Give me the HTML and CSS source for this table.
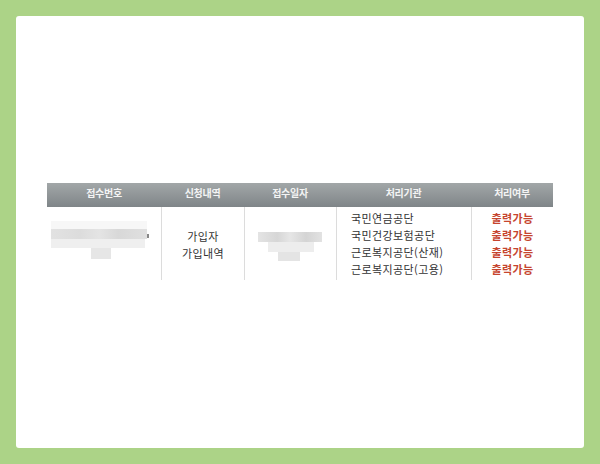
FILE: index.html
```html
<!DOCTYPE html>
<html lang="ko">
<head>
<meta charset="utf-8">
<link rel="stylesheet" href="styles.css">
</head>
<body>
<div class="card">
  <div class="table">
    <div class="head">
      <div class="th">접수번호</div>
      <div class="th">신청내역</div>
      <div class="th">접수일자</div>
      <div class="th">처리기관</div>
      <div class="th">처리여부</div>
    </div>
    <div class="body">
      <div class="td c1">
        <div class="blur b1">
          <span class="px r0"></span>
          <span class="px r1"></span>
          <span class="px r2"></span>
          <span class="px r3"></span>
          <span class="mark"></span>
        </div>
      </div>
      <div class="td c2">
        <div>가입자</div>
        <div>가입내역</div>
      </div>
      <div class="td c3">
        <div class="blur b3">
          <span class="px s1"></span>
          <span class="px s2"></span>
          <span class="px s3"></span>
        </div>
      </div>
      <div class="td c4">
        <div>국민연금공단</div>
        <div>국민건강보험공단</div>
        <div>근로복지공단(산재)</div>
        <div>근로복지공단(고용)</div>
      </div>
      <div class="td c5">
        <div>출력가능</div>
        <div>출력가능</div>
        <div>출력가능</div>
        <div>출력가능</div>
      </div>
    </div>
  </div>
</div>
</body>
</html>
```
FILE: styles.css
```css
html, body {
  margin: 0;
  padding: 0;
}
body {
  width: 600px;
  height: 464px;
  background: #acd387;
  padding: 16px;
  box-sizing: border-box;
  font-family: "Noto Sans CJK KR", "Noto Sans", sans-serif;
}
.card {
  background: #fff;
  width: 568px;
  height: 432px;
  border-radius: 3px;
  padding: 167px 31px 0 31px;
  box-sizing: border-box;
}
.table {
  width: 506px;
}
.head, .body {
  display: grid;
  grid-template-columns: 114px 83px 92px 135px 82px;
}
.head {
  height: 24px;
  background: linear-gradient(#a2a7a8, #7f8588);
}
.th {
  color: #f4f4f4;
  font-size: 10px;
  font-weight: bold;
  line-height: 20px;
  text-align: center;
  letter-spacing: -0.3px;
}
.body {
  height: 73px;
}
.td {
  border-left: 1px solid #dcdcdc;
  font-size: 11px;
  color: #333;
  line-height: 17px;
  letter-spacing: 0.4px;
  display: flex;
  flex-direction: column;
  justify-content: center;
}
.td.c1 {
  border-left: none;
}
.c2 {
  text-align: center;
  padding-top: 2px;
}
.c4 {
  padding-left: 14px;
  padding-top: 1px;
}
.c5 {
  text-align: center;
  color: #c6452f;
  font-weight: bold;
  padding-top: 1px;
}
.blur {
  position: relative;
  height: 48px;
}
.px {
  position: absolute;
  display: block;
}
.b1 .r0 { left: 4px; top: 0; width: 96px; height: 8px; background: #f7f7f7; }
.b1 .r1 { left: 4px; top: 8px; width: 96px; height: 10px; background: linear-gradient(90deg, #e2e2e2, #dcdcdc 30%, #e4e4e4 50%, #d8d8d8 70%, #e0e0e0); }
.b1 .r2 { left: 4px; top: 18px; width: 94px; height: 9px; background: #efefef; }
.b1 .r3 { left: 44px; top: 27px; width: 20px; height: 11px; background: #e6e6e6; }
.b1 .mark { position: absolute; left: 100px; top: 13px; width: 2px; height: 4px; background: #888; }
.b3 .s1 { left: 13px; top: 1px; width: 64px; height: 10px; background: linear-gradient(90deg, #e4e4e4, #d6d6d6 30%, #e6e6e6 50%, #d4d4d4 75%, #e2e2e2); }
.b3 .s2 { left: 23px; top: 11px; width: 46px; height: 10px; background: #ededed; }
.b3 .s3 { left: 33px; top: 21px; width: 22px; height: 9px; background: #e4e4e4; }
.c1 .blur { margin-top: 2px; }
.c3 .blur { margin-top: 14px; height: 40px; }
```
